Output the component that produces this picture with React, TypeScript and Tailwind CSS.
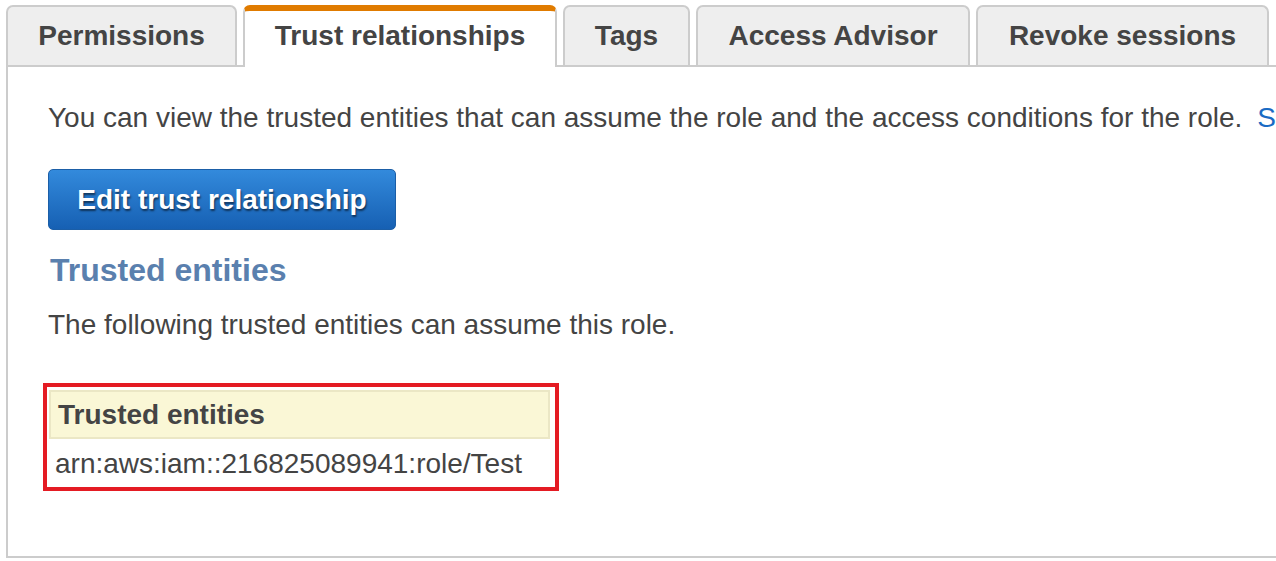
import React from 'react';

const tabs = [
  { label: 'Permissions', w: 'w-[231px]' },
  { label: 'Trust relationships', w: 'w-[314px]', active: true },
  { label: 'Tags', w: 'w-[127px]' },
  { label: 'Access Advisor', w: 'w-[274px]' },
  { label: 'Revoke sessions', w: 'w-[293px]' },
];

const App = () => {
  return (
    <div className="w-[1276px] h-[561px] overflow-hidden bg-white text-[#444] font-['Liberation_Sans',Arial,sans-serif]">
      <div className="pl-[6px] pt-[5px] w-[1400px]">
        {/* Tab strip */}
        <div className="flex items-start gap-[6px] h-[60px]">
          {tabs.map((t) =>
            t.active ? (
              <div
                key={t.label}
                className={`${t.w} relative z-10 h-[62px] bg-white border-2 border-b-0 border-[#ccc] border-t-[6px] border-t-[#e07b00] rounded-t-[7px] flex items-center justify-center pb-[6px] text-[28px] font-bold leading-none`}
              >
                {t.label}
              </div>
            ) : (
              <div
                key={t.label}
                className={`${t.w} h-[60px] bg-[#eee] border-2 border-b-0 border-[#ccc] rounded-t-[7px] flex items-center justify-center text-[28px] font-bold leading-none`}
              >
                {t.label}
              </div>
            )
          )}
        </div>

        {/* Panel */}
        <div className="border-2 border-r-0 border-[#ccc] pl-[40px] pt-[35px] pb-[65px]">
          <p className="text-[28px] leading-[32px] whitespace-nowrap">
            You can view the trusted entities that can assume the role and the access conditions for the role.
            <a className="ml-[15px] text-[#1a6bc4]">Show policy document</a>
          </p>

          <button className="mt-[35px] h-[61px] w-[348px] rounded-[5px] border border-[#1b5ea7] bg-gradient-to-b from-[#338adc] to-[#1660b3] text-white text-[28px] font-bold leading-none [text-shadow:1px_2px_2px_rgba(0,0,0,0.55)]">
            Edit trust relationship
          </button>

          <h3 className="mt-[22px] ml-[2px] text-[32px] leading-[36px] font-bold text-[#5a80ae]">
            Trusted entities
          </h3>

          <p className="mt-[21px] text-[28px] leading-[32px]">
            The following trusted entities can assume this role.
          </p>

          <div className="mt-[42px] ml-[-5px] w-[516px] h-[108px] border-4 border-[#e41b23] pt-[3px] pl-[2px] pr-[5px]">
            <div className="h-[49px] bg-[#faf7d6] border-2 border-[#ebe7c5] flex items-center pl-[7px] pt-[1px] text-[28px] font-bold leading-none">
              Trusted entities
            </div>
            <div className="h-[47px] flex items-center pl-[6px] pt-[3px] text-[28px] leading-none">
              arn:aws:iam::216825089941:role/Test
            </div>
          </div>
        </div>
      </div>
    </div>
  );
};

export default App;
